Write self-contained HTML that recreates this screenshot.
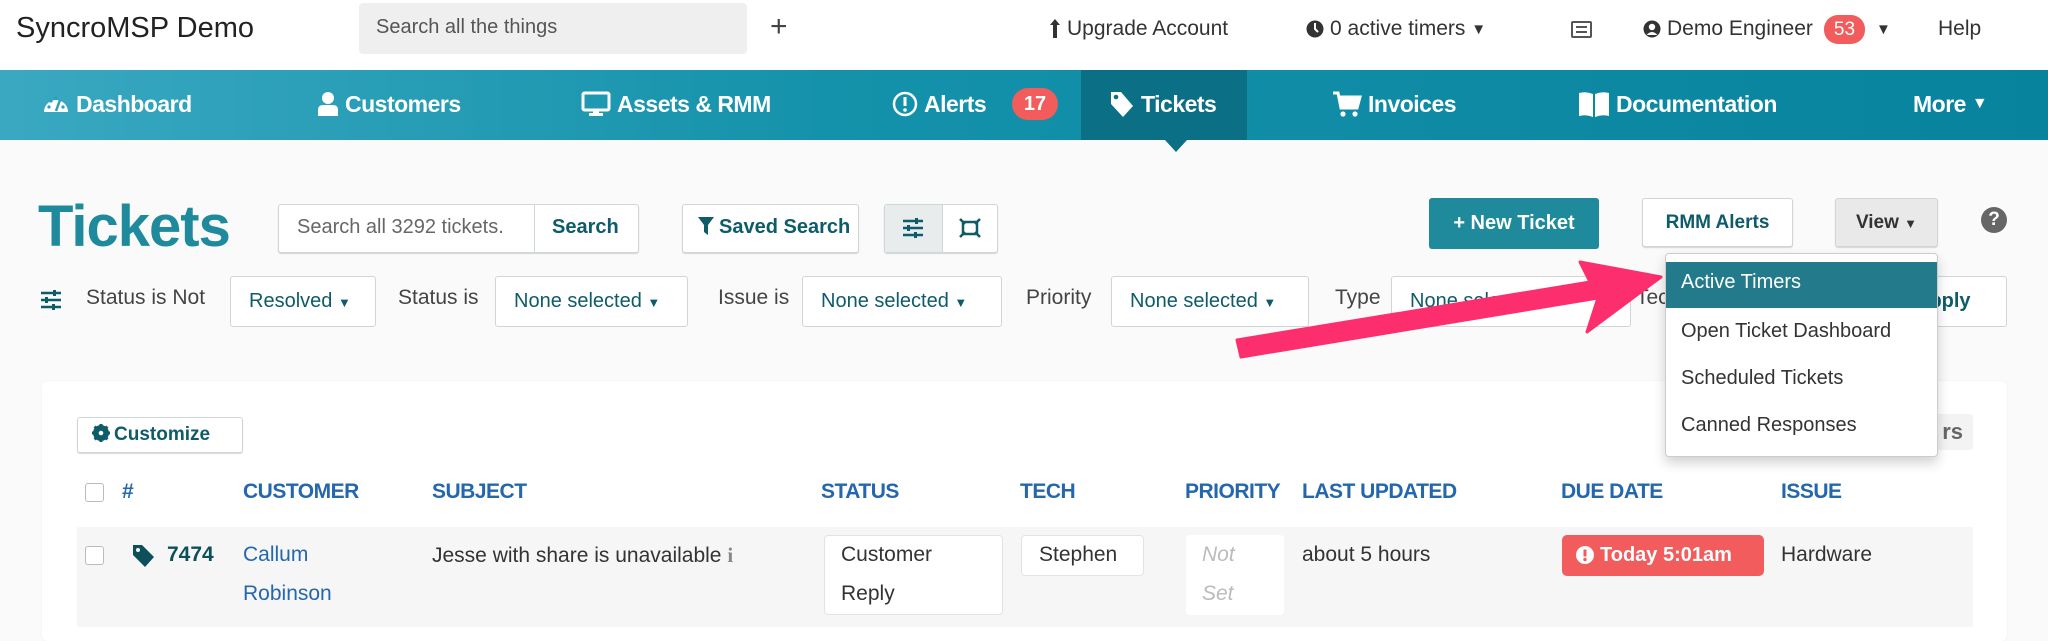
<!DOCTYPE html>
<html><head><meta charset="utf-8"><style>
*{box-sizing:border-box;margin:0;padding:0}
body{width:2048px;height:633px;overflow:hidden;background:#fafafa;font-family:"Liberation Sans",sans-serif;position:relative;color:#333}
.a{position:absolute;white-space:nowrap}
.top{position:absolute;left:0;top:0;width:2048px;height:70px;background:#fff}
.nav{position:absolute;left:0;top:70px;width:2048px;height:70px;background:linear-gradient(90deg,#3aa8c1,#1592ab 40%,#08839e)}
.nv{position:absolute;top:70px;height:68px;display:flex;align-items:center;color:#fff;font-weight:bold;font-size:23px;letter-spacing:-0.5px;white-space:nowrap}
.nv svg,.tb svg{margin-right:6px;flex:none}
.tb{position:absolute;top:0;height:58px;display:flex;align-items:center;font-size:21px;color:#333;white-space:nowrap}
.btn{position:absolute;background:#fff;border:1px solid #cfd6d8;border-radius:3px;box-shadow:0 1px 1px rgba(0,0,0,.15)}
.sel{position:absolute;top:276px;height:51px;background:#fff;border:1px solid #cfd6d8;border-radius:3px;color:#0e5b6a;font-size:20px;line-height:49px;padding-left:18px;white-space:nowrap;overflow:hidden}
.lbl{position:absolute;top:286px;font-size:21px;color:#444;white-space:nowrap}
.th{position:absolute;top:480px;color:#2467ad;font-weight:bold;font-size:21px;letter-spacing:-0.5px}
.td{position:absolute;font-size:21px;color:#333;white-space:nowrap}
</style></head><body>
<div class="top"></div>
<div class="a" style="left:16px;top:12px;font-size:29px;color:#222">SyncroMSP Demo</div>
<div class="a" style="left:359px;top:3px;width:388px;height:51px;background:#efefef;border-radius:4px"></div>
<div class="a" style="left:376px;top:16px;font-size:20px;color:#555">Search all the things</div>
<div class="a" style="left:770px;top:10px;font-size:30px;color:#444">+</div>
<div class="tb" style="left:1049px"><svg width="12" height="22" viewBox="0 0 12 22"><path d="M6 1 L1 7 H4 V20 H8 V7 H11 Z" fill="#333"/></svg>Upgrade Account</div>
<div class="tb" style="left:1306px"><svg width="18" height="20" viewBox="0 0 18 20"><circle cx="9" cy="10" r="8.5" fill="#333"/><path d="M9 4 V10 L12 13" stroke="#fff" stroke-width="2" fill="none"/></svg>0 active timers&nbsp;<span style="font-size:15px">▼</span></div>
<div class="a" style="left:1571px;top:21px;width:21px;height:17px;border:2px solid #555;border-radius:2px"><div style="margin:3px;height:7px;border-top:2px solid #555;border-bottom:2px solid #555"></div></div>
<div class="tb" style="left:1643px"><svg width="18" height="20" viewBox="0 0 18 20"><circle cx="9" cy="10" r="8.5" fill="#333"/><circle cx="9" cy="8" r="3.2" fill="#fff"/><path d="M3.5 16 Q9 10 14.5 16" fill="#fff"/></svg>Demo Engineer</div>
<div class="a" style="left:1824px;top:15px;width:41px;height:29px;background:#f25c5c;border-radius:14px;color:#fff;font-size:19px;text-align:center;line-height:29px">53</div>
<div class="tb" style="left:1876px;font-size:15px">▼</div>
<div class="tb" style="left:1938px">Help</div>

<div class="nav"></div>
<div class="a" style="left:1081px;top:70px;width:166px;height:70px;background:#0b6f85"></div>
<div class="a" style="left:1165px;top:140px;width:0;height:0;border-left:11px solid transparent;border-right:11px solid transparent;border-top:12px solid #0b6f85"></div>
<div class="nv" style="left:42px"><svg width="28" height="24" viewBox="0 0 28 24"><path d="M2 20 A12 12 0 1 1 26 20 Z" fill="#fff"/><path d="M14 19 L18 8" stroke="#2aa0b8" stroke-width="2.5"/><circle cx="7" cy="15" r="1.6" fill="#2aa0b8"/><circle cx="9" cy="9" r="1.6" fill="#2aa0b8"/><circle cx="14" cy="6" r="1.6" fill="#2aa0b8"/><circle cx="21" cy="15" r="1.6" fill="#2aa0b8"/></svg>Dashboard</div>
<div class="nv" style="left:317px"><svg width="22" height="26" viewBox="0 0 22 26"><circle cx="11" cy="7" r="6" fill="#fff"/><path d="M1 25 V19 Q1 14 6 14 H16 Q21 14 21 19 V25 Z" fill="#fff"/></svg>Customers</div>
<div class="nv" style="left:581px"><svg width="30" height="26" viewBox="0 0 30 26"><rect x="2" y="2" width="26" height="17" rx="1.5" fill="none" stroke="#fff" stroke-width="3"/><rect x="12" y="19" width="6" height="4" fill="#fff"/><rect x="8" y="22" width="14" height="3" fill="#fff"/></svg>Assets &amp; RMM</div>
<div class="nv" style="left:892px"><svg width="26" height="26" viewBox="0 0 26 26"><circle cx="13" cy="13" r="11" fill="none" stroke="#fff" stroke-width="2.5"/><rect x="11.5" y="6" width="3" height="9" fill="#fff"/><circle cx="13" cy="19" r="1.8" fill="#fff"/></svg>Alerts</div>
<div class="a" style="left:1012px;top:88px;width:46px;height:32px;background:#f25c5c;border-radius:16px;color:#fff;font-weight:bold;font-size:20px;text-align:center;line-height:32px">17</div>
<div class="nv" style="left:1109px"><svg width="26" height="28" viewBox="0 0 26 28"><path d="M2 2 H12 L24 16 L14 27 L2 14 Z" fill="#fff"/><circle cx="7" cy="7" r="2.3" fill="#0b6f85"/></svg>Tickets</div>
<div class="nv" style="left:1332px"><svg width="30" height="28" viewBox="0 0 30 28"><path d="M1 3 H6 L9 18 H25 L28 7 H8" fill="none" stroke="#fff" stroke-width="3"/><path d="M8 7 H28 L25 18 H9 Z" fill="#fff"/><circle cx="11" cy="24" r="2.6" fill="#fff"/><circle cx="23" cy="24" r="2.6" fill="#fff"/></svg>Invoices</div>
<div class="nv" style="left:1578px"><svg width="32" height="28" viewBox="0 0 32 28"><path d="M1 3 Q8 1 15 4 V27 Q8 24 1 26 Z" fill="#fff"/><path d="M17 4 Q24 1 31 3 V26 Q24 24 17 27 Z" fill="#fff"/></svg>Documentation</div>
<div class="nv" style="left:1913px">More&nbsp;<span style="font-size:16px">▼</span></div>

<div class="a" style="left:38px;top:193px;font-size:58px;font-weight:bold;color:#1e8a9c;letter-spacing:-1px">Tickets</div>
<div class="btn" style="left:278px;top:204px;width:361px;height:49px"></div>
<div class="a" style="left:534px;top:204px;width:1px;height:49px;background:#cfd6d8"></div>
<div class="a" style="left:297px;top:216px;font-size:20px;color:#666">Search all 3292 tickets.</div>
<div class="a" style="left:552px;top:216px;font-size:20px;color:#0e5b6a;font-weight:bold">Search</div>
<div class="btn" style="left:682px;top:204px;width:177px;height:49px"></div>
<div class="a" style="left:698px;top:216px;font-size:20px;color:#0e5b6a;font-weight:bold"><svg width="16" height="20" viewBox="0 0 16 20" style="vertical-align:-3px;margin-right:5px"><path d="M0 1 H16 L10 9 V19 L6 16 V9 Z" fill="#0e5b6a"/></svg>Saved Search</div>
<div class="btn" style="left:884px;top:204px;width:114px;height:49px"></div>
<div class="a" style="left:885px;top:205px;width:57px;height:47px;background:#e8ecec"></div>
<div class="a" style="left:942px;top:204px;width:1px;height:49px;background:#cfd6d8"></div>
<svg class="a" style="left:902px;top:218px" width="22" height="20" viewBox="0 0 22 20"><path d="M1 3 H21 M1 10 H21 M1 17 H21" stroke="#0e5b6a" stroke-width="2.5"/><rect x="13" y="0" width="3" height="6" fill="#0e5b6a"/><rect x="5" y="7" width="3" height="6" fill="#0e5b6a"/><rect x="12" y="14" width="3" height="6" fill="#0e5b6a"/></svg>
<svg class="a" style="left:959px;top:218px" width="22" height="20" viewBox="0 0 22 20"><rect x="4" y="4" width="14" height="12" fill="none" stroke="#0e5b6a" stroke-width="2.5"/><path d="M1 1 L6 6 M21 1 L16 6 M1 19 L6 14 M21 19 L16 14" stroke="#0e5b6a" stroke-width="2.5"/></svg>
<div class="a" style="left:1429px;top:198px;width:170px;height:51px;background:#1e8a9c;border-radius:3px;color:#fff;font-weight:bold;font-size:20px;text-align:center;line-height:51px">+ New Ticket</div>
<div class="btn" style="left:1642px;top:198px;width:151px;height:49px;color:#0e5b6a;font-weight:bold;font-size:19px;text-align:center;line-height:47px">RMM Alerts</div>
<div class="btn" style="left:1835px;top:198px;width:103px;height:49px;background:#e9e9e9;color:#333;font-weight:bold;font-size:19px;text-align:center;line-height:47px">View <span style="font-size:13px">▼</span></div>
<div class="a" style="left:1981px;top:207px;width:26px;height:26px;border-radius:50%;background:#666;color:#fff;font-weight:bold;font-size:19px;text-align:center;line-height:26px">?</div>

<svg class="a" style="left:40px;top:290px" width="22" height="20" viewBox="0 0 22 20"><path d="M1 3 H21 M1 10 H21 M1 17 H21" stroke="#0e5b6a" stroke-width="2.5"/><rect x="13" y="0" width="3" height="6" fill="#0e5b6a"/><rect x="5" y="7" width="3" height="6" fill="#0e5b6a"/><rect x="12" y="14" width="3" height="6" fill="#0e5b6a"/></svg>
<div class="lbl" style="left:86px">Status is Not</div>
<div class="sel" style="left:230px;width:146px">Resolved <span style="font-size:13px">▼</span></div>
<div class="lbl" style="left:398px">Status is</div>
<div class="sel" style="left:495px;width:193px">None selected <span style="font-size:13px">▼</span></div>
<div class="lbl" style="left:718px">Issue is</div>
<div class="sel" style="left:802px;width:200px">None selected <span style="font-size:13px">▼</span></div>
<div class="lbl" style="left:1026px">Priority</div>
<div class="sel" style="left:1111px;width:198px">None selected <span style="font-size:13px">▼</span></div>
<div class="lbl" style="left:1335px">Type</div>
<div class="sel" style="left:1391px;width:240px">None selected <span style="font-size:13px">▼</span></div>
<div class="lbl" style="left:1636px">Tech</div>
<div class="sel" style="left:1890px;width:117px;font-weight:bold;padding-left:24px">Apply</div>

<div class="a" style="left:42px;top:381px;width:1965px;height:260px;background:#fff;border-radius:6px;box-shadow:0 0 2px rgba(0,0,0,.06)"></div>
<div class="btn" style="left:77px;top:417px;width:166px;height:36px;color:#0e5b6a;font-weight:bold;font-size:19px;line-height:34px;padding-left:14px"><svg width="18" height="18" viewBox="0 0 18 18" style="vertical-align:-2px;margin-right:4px"><circle cx="9" cy="9" r="6" fill="none" stroke="#0e5b6a" stroke-width="4"/><path d="M9 0 V18 M0 9 H18 M2.6 2.6 L15.4 15.4 M15.4 2.6 L2.6 15.4" stroke="#0e5b6a" stroke-width="3"/><circle cx="9" cy="9" r="2.3" fill="#fff"/></svg>Customize</div>
<div class="a" style="left:1880px;top:414px;width:93px;height:36px;background:#f3f3f3;border-radius:4px;color:#666;font-weight:bold;font-size:22px;line-height:36px;text-align:right;padding-right:10px">rs</div>
<div class="a" style="left:85px;top:483px;width:19px;height:19px;border:1px solid #bbb;border-radius:3px;background:#fff"></div>
<div class="th" style="left:122px">#</div>
<div class="th" style="left:243px">CUSTOMER</div>
<div class="th" style="left:432px">SUBJECT</div>
<div class="th" style="left:821px">STATUS</div>
<div class="th" style="left:1020px">TECH</div>
<div class="th" style="left:1185px">PRIORITY</div>
<div class="th" style="left:1302px">LAST UPDATED</div>
<div class="th" style="left:1561px">DUE DATE</div>
<div class="th" style="left:1781px">ISSUE</div>

<div class="a" style="left:77px;top:527px;width:1896px;height:100px;background:#f6f6f6"></div>
<div class="a" style="left:85px;top:546px;width:19px;height:19px;border:1px solid #bbb;border-radius:3px;background:#fff"></div>
<svg class="a" style="left:132px;top:544px" width="24" height="24" viewBox="0 0 24 24"><path d="M1 1 H10 L22 13 L13 23 L1 11 Z" fill="#0e4f5c"/><circle cx="6" cy="6" r="2" fill="#f6f6f6"/></svg>
<div class="td" style="left:167px;top:543px;color:#0e4f5c;font-weight:bold">7474</div>
<div class="td" style="left:243px;top:543px;color:#2467ad">Callum</div>
<div class="td" style="left:243px;top:582px;color:#2467ad">Robinson</div>
<div class="td" style="left:432px;top:543px">Jesse with share is unavailable <span style="color:#888;font-weight:bold;font-family:'Liberation Serif',serif">i</span></div>
<div class="a" style="left:824px;top:535px;width:179px;height:80px;background:#fff;border:1px solid #e3e3e3;border-radius:4px"></div>
<div class="td" style="left:841px;top:543px">Customer</div>
<div class="td" style="left:841px;top:582px">Reply</div>
<div class="a" style="left:1021px;top:535px;width:123px;height:41px;background:#fff;border:1px solid #e3e3e3;border-radius:4px"></div>
<div class="td" style="left:1039px;top:543px">Stephen</div>
<div class="a" style="left:1186px;top:535px;width:98px;height:80px;background:#fff;border-radius:4px"></div>
<div class="td" style="left:1202px;top:543px;color:#bbb;font-style:italic">Not</div>
<div class="td" style="left:1202px;top:582px;color:#bbb;font-style:italic">Set</div>
<div class="td" style="left:1302px;top:543px">about 5 hours</div>
<div class="a" style="left:1562px;top:535px;width:202px;height:41px;background:#f25c5c;border-radius:5px;color:#fff;font-weight:bold;font-size:20px;line-height:41px;padding-left:14px"><svg width="18" height="18" viewBox="0 0 18 18" style="vertical-align:-3px;margin-right:6px"><circle cx="9" cy="9" r="9" fill="#fff"/><rect x="7.5" y="3.5" width="3" height="7" fill="#f25c5c"/><circle cx="9" cy="13.5" r="1.7" fill="#f25c5c"/></svg>Today 5:01am</div>
<div class="td" style="left:1781px;top:543px">Hardware</div>

<svg class="a" style="left:0;top:0" width="2048" height="633"><polygon points="1241,357 1598,298 1587,332 1661,277 1580,262 1590,282 1237,340" fill="#fd2e6d" stroke="#fd2e6d" stroke-width="3" stroke-linejoin="round"/></svg>

<div class="a" style="left:1665px;top:253px;width:273px;height:204px;background:#fff;border:1px solid #ccc;border-radius:4px;box-shadow:0 6px 12px rgba(0,0,0,.18)"></div>
<div class="a" style="left:1666px;top:262px;width:271px;height:46px;background:#227a8a"></div>
<div class="a" style="left:1681px;top:271px;font-size:20px;color:#fff">Active Timers</div>
<div class="a" style="left:1681px;top:320px;font-size:20px;color:#333">Open Ticket Dashboard</div>
<div class="a" style="left:1681px;top:367px;font-size:20px;color:#333">Scheduled Tickets</div>
<div class="a" style="left:1681px;top:414px;font-size:20px;color:#333">Canned Responses</div>
</body></html>
